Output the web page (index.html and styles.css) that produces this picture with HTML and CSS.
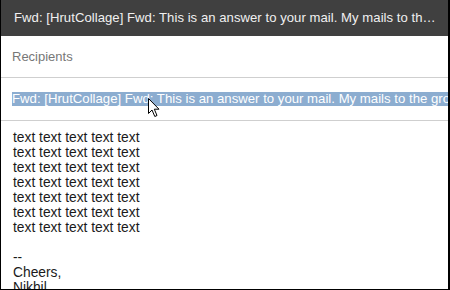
FILE: index.html
```html
<!DOCTYPE html>
<html>
<head>
<meta charset="utf-8">
<link rel="stylesheet" href="styles.css">
</head>
<body>
<div class="frame">
  <div class="titlebar">Fwd: [HrutCollage] Fwd: This is an answer to your mail. My mails to th…</div>
  <div class="row recipients">Recipients</div>
  <div class="row subject"><span class="sel">Fwd: [HrutCollage] Fwd: This is an answer to your mail. My mails to the group are not reaching</span></div>
  <div class="body">
    <div>text text text text text</div>
    <div>text text text text text</div>
    <div>text text text text text</div>
    <div>text text text text text</div>
    <div>text text text text text</div>
    <div>text text text text text</div>
    <div>text text text text text</div>
    <div class="blank">&nbsp;</div>
    <div>--</div>
    <div>Cheers,</div>
    <div>Nikhil</div>
  </div>
  <svg class="cursor" width="13" height="20" viewBox="0 0 13 20">
    <path d="M0.5 0.5 L0.5 15.5 L4 12 L6.8 18.5 L9 17.5 L6.3 11.2 L11 11.2 Z" fill="#fff" stroke="#000" stroke-width="1" stroke-linejoin="miter"/>
  </svg>
</div>
</body>
</html>
```
FILE: styles.css
```css
html, body {
  margin: 0;
  padding: 0;
  background: #fff;
}
.frame {
  position: relative;
  width: 450px;
  height: 290px;
  box-sizing: border-box;
  border-left: 1px solid #000;
  border-right: 2px solid #000;
  border-bottom: 1px solid #000;
  overflow: hidden;
  font-family: "Liberation Sans", Arial, sans-serif;
  font-size: 13px;
}
.titlebar {
  height: 36px;
  line-height: 35px;
  background: #404040;
  color: #f0f0f0;
  padding-left: 14px;
  margin-left: -1px;
  margin-right: -2px;
  font-size: 13.1px;
  letter-spacing: 0.05px;
  white-space: nowrap;
  overflow: hidden;
}
.row {
  border-bottom: 1px solid #cfcfcf;
  white-space: nowrap;
  overflow: hidden;
}
.recipients {
  height: 41px;
  line-height: 41px;
  padding-left: 11px;
  color: #777;
}
.subject {
  height: 42px;
  padding-left: 11px;
  display: flex;
  align-items: center;
}
.sel {
  background: #8cadd0;
  color: #fff;
  line-height: 14px;
  font-size: 13.2px;
}
.body {
  padding: 9px 12px 0 12px;
  color: #1a1a1a;
  line-height: 15px;
  font-size: 13.8px;
}
.cursor {
  position: absolute;
  left: 147px;
  top: 98px;
}
```
